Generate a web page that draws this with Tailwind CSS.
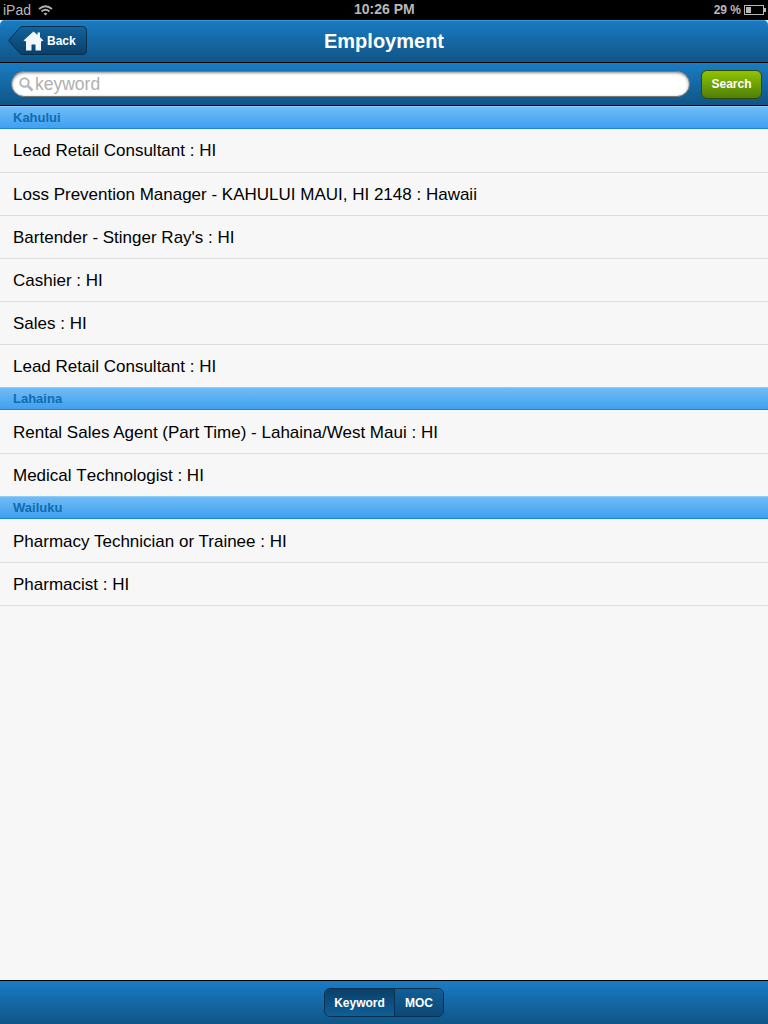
<!DOCTYPE html>
<html lang="en">
<head>
  <meta charset="UTF-8" />
  <title>Employment</title>
  <script src="https://cdn.jsdelivr.net/npm/@tailwindcss/browser@4"></script>
</head>
<body class="bg-[#f7f7f7] font-['Liberation_Sans',Arial,sans-serif]">
  <div class="flex flex-col h-[1024px] w-[768px] overflow-hidden">
    <!-- Status bar -->
    <div class="h-5 bg-black flex items-center justify-between text-[#b8b8b8] text-[14px] shrink-0 relative pl-[3px] pr-[3px]">
      <div class="flex items-center gap-[7px]">
        <span>iPad</span>
        <svg width="15" height="11" viewBox="0 0 15 11" fill="none" stroke="#b0b0b0" stroke-width="1.8">
          <path d="M1 4 Q7.5 -1.5 14 4" />
          <path d="M3.5 6.5 Q7.5 3 11.5 6.5" />
          <path d="M7.5 10.5 L5.5 8.5 Q7.5 6.8 9.5 8.5 Z" fill="#b0b0b0" stroke="none" />
        </svg>
      </div>
      <span class="absolute left-[354px] top-[-1px] font-bold text-[14px]">10:26 PM</span>
      <div class="flex items-center gap-[3px]">
        <span class="font-bold text-[12px]">29 %</span>
        <div class="w-[20px] h-[10px] border border-[#b8b8b8] p-[1px] relative mr-[1px]">
          <div class="w-[5px] h-full bg-[#b8b8b8]"></div>
          <div class="absolute right-[-3px] top-[2px] w-[2px] h-[4px] bg-[#b8b8b8]"></div>
        </div>
      </div>
    </div>

    <!-- Header -->
    <div class="h-[43px] shrink-0 bg-gradient-to-b from-[#1a7cc4] to-[#0f5587] border-b border-black rounded-t-[5px] flex items-center justify-center relative shadow-[inset_0_1px_0_#3a97d8]">
      <div class="absolute left-[8px] top-[6px] h-[29px] flex items-center">
        <svg class="absolute left-0 top-0" width="80" height="29" viewBox="0 0 80 29">
          <defs>
            <linearGradient id="backFill" x1="0" y1="0" x2="0" y2="1">
              <stop offset="0" stop-color="#12639e" />
              <stop offset="1" stop-color="#0a3f69" />
            </linearGradient>
          </defs>
          <path d="M0.5 14.5 L12 1.5 Q13 0.5 15 0.5 L74 0.5 Q78.500 0.500 78.500 5 L78.500 24 Q78.500 28.500 74 28.500 L15 28.500 Q13 28.500 12 27.500 Z" fill="url(#backFill)" stroke="#0a2f4d" />
        </svg>
        <svg class="relative ml-[15px]" width="21" height="20" viewBox="0 0 21 20" fill="#f2f7fb">
          <path d="M10.500 0.500 L14.500 4 L14.500 1.500 L17 1.500 L17 6.300 L20.500 9.500 L18 10.500 L18 19.500 L12.500 19.500 L12.500 13.500 L8.500 13.500 L8.500 19.500 L3 19.500 L3 10.500 L0.500 9.500 Z" />
        </svg>
        <span class="relative ml-[3px] text-white font-bold text-[12px]">Back</span>
      </div>
      <h1 class="text-white font-bold text-[20px]">Employment</h1>
    </div>

    <!-- Search -->
    <div class="h-[43px] shrink-0 bg-gradient-to-b from-[#1a7cc4] to-[#0f5587] border-b border-black flex items-center gap-[11px] pl-[11px] pr-[6px]">
      <div class="w-[680px] h-[26px] bg-white rounded-full border border-[#777] shadow-[inset_0_1px_3px_#888] flex items-center pl-[6px] gap-[1px]">
        <svg width="16" height="16" viewBox="0 0 16 16" fill="none" stroke="#b5b5b5">
          <circle cx="6.500" cy="6.500" r="4.200" stroke-width="2" />
          <path d="M10 10 L14.500 14.500" stroke-width="2.600" />
        </svg>
        <span class="text-[#b0b0b0] text-[17.500px] pt-px">keyword</span>
      </div>
      <div class="w-[61px] h-[29px] rounded-[6px] border border-[#2f4a0a] bg-gradient-to-b from-[#8fc400] to-[#4f7f06] flex items-center justify-center text-white font-bold text-[12px]">Search</div>
    </div>

    <!-- Kahului -->
    <div class="h-[23px] shrink-0 bg-gradient-to-b from-[#71bdf7] to-[#3fa0f0] border-b border-[#1a86dd] shadow-[inset_0_1px_0_#8fcdf9] flex items-center pl-[13px] pt-px text-[#0f6cb0] font-bold text-[13px]">Kahului</div>
    <div class="h-[44px] shrink-0 border-b border-[#dcdcdc] flex items-center pl-[13px] pt-px text-black text-[17px] [font-kerning:none]">Lead Retail Consultant : HI</div>
    <div class="h-[43px] shrink-0 border-b border-[#dcdcdc] flex items-center pl-[13px] pt-px text-black text-[17px] [font-kerning:none]">Loss Prevention Manager - KAHULUI MAUI, HI 2148 : Hawaii</div>
    <div class="h-[43px] shrink-0 border-b border-[#dcdcdc] flex items-center pl-[13px] pt-px text-black text-[17px] [font-kerning:none]">Bartender - Stinger Ray's : HI</div>
    <div class="h-[43px] shrink-0 border-b border-[#dcdcdc] flex items-center pl-[13px] pt-px text-black text-[17px] [font-kerning:none]">Cashier : HI</div>
    <div class="h-[43px] shrink-0 border-b border-[#dcdcdc] flex items-center pl-[13px] pt-px text-black text-[17px] [font-kerning:none]">Sales : HI</div>
    <div class="h-[42px] shrink-0 flex items-center pl-[13px] pt-px text-black text-[17px] [font-kerning:none]">Lead Retail Consultant : HI</div>

    <!-- Lahaina -->
    <div class="h-[23px] shrink-0 bg-gradient-to-b from-[#71bdf7] to-[#3fa0f0] border-b border-[#1a86dd] shadow-[inset_0_1px_0_#8fcdf9] flex items-center pl-[13px] pt-px text-[#0f6cb0] font-bold text-[13px]">Lahaina</div>
    <div class="h-[44px] shrink-0 border-b border-[#dcdcdc] flex items-center pl-[13px] pt-[2px] text-black text-[17px]">Rental Sales Agent (Part Time) - Lahaina/West Maui : HI</div>
    <div class="h-[42px] shrink-0 flex items-center pl-[13px] pt-px text-black text-[17px] [font-kerning:none]">Medical Technologist : HI</div>

    <!-- Wailuku -->
    <div class="h-[23px] shrink-0 bg-gradient-to-b from-[#71bdf7] to-[#3fa0f0] border-b border-[#1a86dd] shadow-[inset_0_1px_0_#8fcdf9] flex items-center pl-[13px] pt-px text-[#0f6cb0] font-bold text-[13px]">Wailuku</div>
    <div class="h-[44px] shrink-0 border-b border-[#dcdcdc] flex items-center pl-[13px] pt-[2px] text-black text-[17px]">Pharmacy Technician or Trainee : HI</div>
    <div class="h-[43px] shrink-0 border-b border-[#dcdcdc] flex items-center pl-[13px] pt-px text-black text-[17px] [font-kerning:none]">Pharmacist : HI</div>

    <div class="flex-1"></div>

    <!-- Footer -->
    <div class="h-[44px] shrink-0 border-t border-black bg-gradient-to-b from-[#1a7cc4] to-[#0f5587] flex items-center justify-center">
      <div class="flex h-[29px] rounded-[6px] border border-[#0a2f4d] overflow-hidden text-white font-bold text-[12px]">
        <div class="w-[70px] bg-gradient-to-b from-[#0a3f69] to-[#0f5f96] border-r border-[#0a2f4d] flex items-center justify-center pt-px">Keyword</div>
        <div class="w-[48px] bg-gradient-to-b from-[#125f98] to-[#0c4876] flex items-center justify-center pt-px">MOC</div>
      </div>
    </div>
  </div>
</body>
</html>
